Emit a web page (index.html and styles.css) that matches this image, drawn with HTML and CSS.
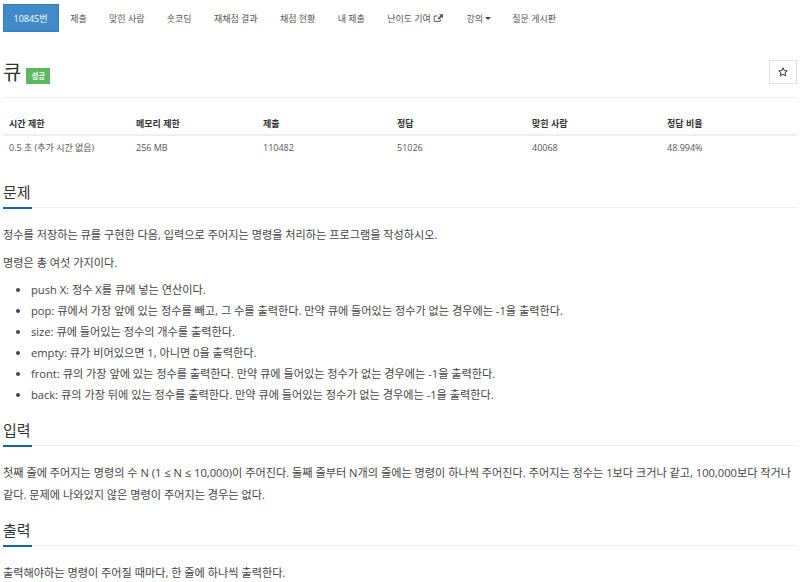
FILE: index.html
```html
<!DOCTYPE html>
<html lang="ko">
<head>
<meta charset="utf-8">
<title>큐</title>
<link rel="stylesheet" href="styles.css">
</head>
<body>
<nav class="tabs">
  <a class="tab active">10845번</a>
  <a class="tab">제출</a>
  <a class="tab">맞힌 사람</a>
  <a class="tab">숏코딩</a>
  <a class="tab">재채점 결과</a>
  <a class="tab">채점 현황</a>
  <a class="tab">내 제출</a>
  <a class="tab">난이도 기여 <svg class="ext" viewBox="0 0 12 10" width="11" height="9"><path d="M8 6v2.2H1.2V2.2H5" fill="none" stroke="#555" stroke-width="1.1"/><path d="M6.6 0.4H11V4.8L9.5 3.4 6.3 6.5 4.9 5.1 8.1 2z" fill="#555"/></svg></a>
  <a class="tab">강의<span class="caret"></span></a>
  <a class="tab">질문 게시판</a>
</nav>
<header class="title-row">
  <h1 class="title">큐 <span class="badge">성공</span></h1>
  <button class="star" aria-label="즐겨찾기"><svg viewBox="0 0 12 12" width="10" height="10"><path d="M6 1l1.5 3.3 3.6.4-2.7 2.4.8 3.5L6 8.8l-3.2 1.8.8-3.5L.9 4.7l3.6-.4z" fill="none" stroke="#222" stroke-width="1.1"/></svg></button>
</header>
<table class="info">
  <thead><tr><th>시간 제한</th><th>메모리 제한</th><th>제출</th><th>정답</th><th>맞힌 사람</th><th>정답 비율</th></tr></thead>
  <tbody><tr><td>0.5 초 (추가 시간 없음)</td><td>256 MB</td><td>110482</td><td>51026</td><td>40068</td><td>48.994%</td></tr></tbody>
</table>
<section class="sec">
  <h2 class="sec-title"><span>문제</span></h2>
  <p class="lead">정수를 저장하는 큐를 구현한 다음, 입력으로 주어지는 명령을 처리하는 프로그램을 작성하시오.</p>
  <p class="before-list">명령은 총 여섯 가지이다.</p>
  <ul>
    <li>push X: 정수 X를 큐에 넣는 연산이다.</li>
    <li>pop: 큐에서 가장 앞에 있는 정수를 빼고, 그 수를 출력한다. 만약 큐에 들어있는 정수가 없는 경우에는 -1을 출력한다.</li>
    <li>size: 큐에 들어있는 정수의 개수를 출력한다.</li>
    <li>empty: 큐가 비어있으면 1, 아니면 0을 출력한다.</li>
    <li>front: 큐의 가장 앞에 있는 정수를 출력한다. 만약 큐에 들어있는 정수가 없는 경우에는 -1을 출력한다.</li>
    <li>back: 큐의 가장 뒤에 있는 정수를 출력한다. 만약 큐에 들어있는 정수가 없는 경우에는 -1을 출력한다.</li>
  </ul>
</section>
<section class="sec">
  <h2 class="sec-title"><span>입력</span></h2>
  <p class="tight">첫째 줄에 주어지는 명령의 수 N (1 ≤ N ≤ 10,000)이 주어진다. 둘째 줄부터 N개의 줄에는 명령이 하나씩 주어진다. 주어지는 정수는 1보다 크거나 같고, 100,000보다 작거나 같다. 문제에 나와있지 않은 명령이 주어지는 경우는 없다.</p>
</section>
<section class="sec">
  <h2 class="sec-title"><span>출력</span></h2>
  <p>출력해야하는 명령이 주어질 때마다, 한 줄에 하나씩 출력한다.</p>
</section>
</body>
</html>
```
FILE: styles.css
```css
html, body { margin: 0; padding: 0; background: #fff; }
body {
  width: 800px;
  height: 582px;
  overflow: hidden;
  box-sizing: border-box;
  padding: 4px 3px 0;
  font-family: "Open Sans", "Noto Sans CJK KR", sans-serif;
  font-size: 11px;
  color: #333;
}
.tabs { display: flex; height: 28px; }
.tab {
  display: flex;
  align-items: center;
  gap: 2px;
  padding: 0 11.15px;
  font-size: 9px;
  color: #555;
  white-space: pre;
}
.tab.active {
  background: #428bca;
  color: #fff;
  border: 1px solid #357ebd;
  box-sizing: border-box;
  padding: 0 10.5px 0 9.5px;
}
.ext { margin-left: -2px; }
.caret {
  margin-left: -0.5px;
  margin-right: -0.5px;
  border-top: 3px solid #444;
  border-left: 3px solid transparent;
  border-right: 3px solid transparent;
}
.title-row {
  display: flex;
  justify-content: space-between;
  align-items: center;
  margin-top: 28px;
  padding-bottom: 13px;
  border-bottom: 1px solid #eee;
  height: 24px;
}
.title { margin: 0; padding-top: 2px; font-weight: 400; font-size: 20px; line-height: 24px; color: #333; display: flex; align-items: center; gap: 5px; }
.badge {
  background: #5cb85c;
  color: #fff;
  font-size: 7.5px;
  font-weight: 700;
  line-height: 16px;
  height: 16px;
  padding: 0 5px;
  margin-top: 6px;
}
.star {
  width: 28px;
  height: 24px;
  padding: 0;
  background: #fff;
  border: 1px solid #ddd;
  display: flex;
  align-items: center;
  justify-content: center;
}
.info { width: 100%; margin: 12px 0 13px; border-collapse: collapse; table-layout: fixed; font-size: 9px; }
.info th, .info td { text-align: left; padding: 0 6px; }
.info th:nth-child(1), .info th:nth-child(2) { width: 127px; }
.info th:nth-child(3) { width: 134px; }
.info th:nth-child(4), .info th:nth-child(5) { width: 135px; }
.info th { height: 25px; padding-top: 2px; box-sizing: border-box; font-weight: 700; color: #333; border-bottom: 2px solid #eee; }
.info td { height: 22px; color: #555; }
.sec { margin: 0; }
.sec-title { margin: 0 0 16px; font-size: 15px; font-weight: 400; line-height: 24px; border-bottom: 1px solid #eee; color: #333; height: 27px; padding-top: 9px; }
.sec-title span { display: inline-block; height: 27px; border-bottom: 2px solid #0d66b0; width: 29px; }
p { margin: 0 0 6.5px; font-size: 11.15px; line-height: 21.5px; color: #444; }
.lead { margin-top: 1px; }
.before-list { margin-bottom: 5px; }
.tight { margin-bottom: 4px; }
ul { margin: 0 0 4.5px; padding: 0 0 0 28px; list-style: disc; }
li { font-size: 11.15px; line-height: 21px; color: #444; }
```
